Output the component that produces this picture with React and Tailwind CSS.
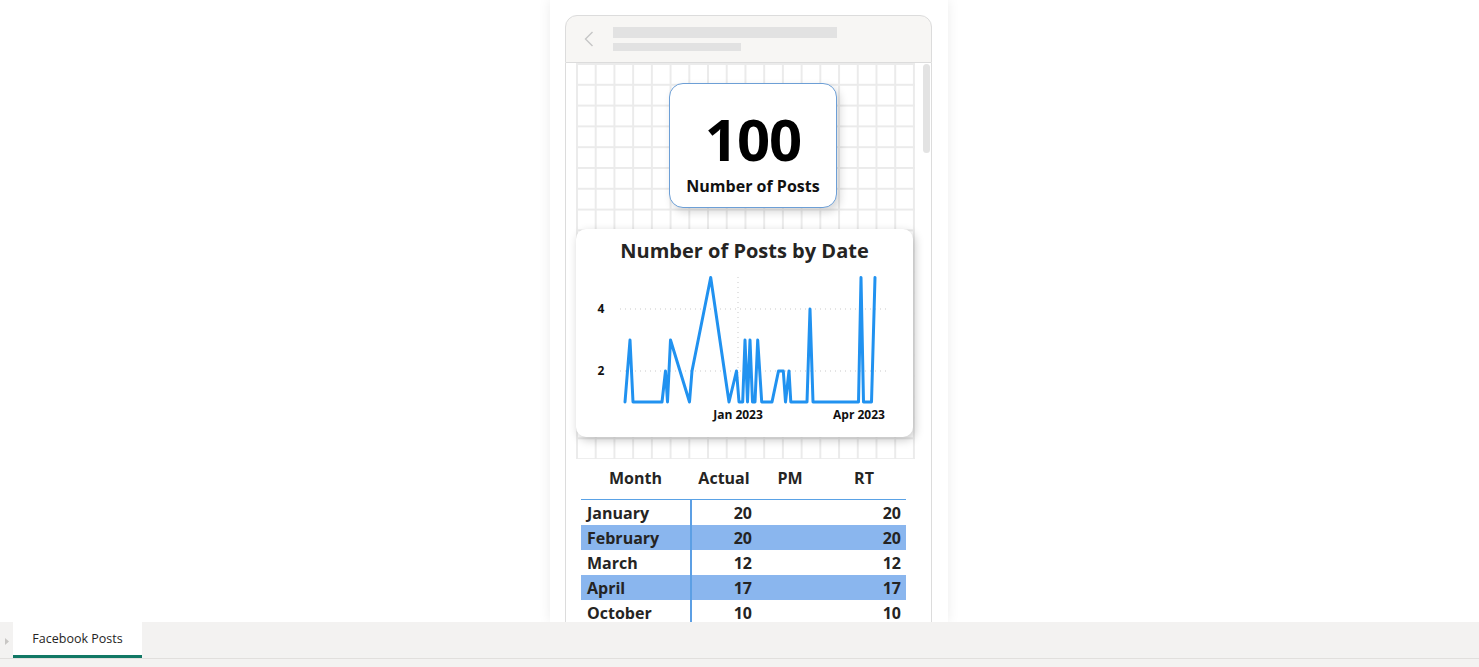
const PTS =
  "49,137 54,75 57,137 86,137 89.5,106 91.5,137 94.5,75 113.5,137 116,106 134.7,12.5 153,137 160.5,106 163,137 166.7,137 169,75 171.5,137 174,75 176.5,137 179,137 181.7,75 185.7,137 196,137 202.5,106 207.3,106 209.5,137 213,106 214.8,137 231,137 234,44 237,137 282.5,137 285,12.5 287.5,137 295.5,137 299,12.5";

const rows = [
  { m: "January", a: "20", r: "20", hl: false },
  { m: "February", a: "20", r: "20", hl: true },
  { m: "March", a: "12", r: "12", hl: false },
  { m: "April", a: "17", r: "17", hl: true },
  { m: "October", a: "10", r: "10", hl: false },
];

function Chart() {
  return (
    <svg width="337" height="172" viewBox="0 0 337 172" className="block">
      <g stroke="#c9c9c9" strokeWidth="1" strokeDasharray="1 4">
        <line x1="44" y1="44" x2="310" y2="44" />
        <line x1="44" y1="106" x2="310" y2="106" />
        <line x1="162" y1="12" x2="162" y2="137" />
      </g>
      <g fontFamily="'Open Sans', sans-serif" fontWeight="700" fontSize="12" fill="#111">
        <text x="25" y="48" textAnchor="middle">4</text>
        <text x="25" y="110" textAnchor="middle">2</text>
        <text x="162" y="154" textAnchor="middle">Jan 2023</text>
        <text x="283" y="154" textAnchor="middle">Apr 2023</text>
      </g>
      <polyline
        points={PTS}
        fill="none"
        stroke="#2192f0"
        strokeWidth="3"
        strokeLinejoin="round"
        strokeLinecap="round"
      />
    </svg>
  );
}

export default function App() {
  return (
    <div className="w-[1479px] h-[667px] bg-white flex flex-col overflow-hidden font-['Open_Sans',sans-serif] text-[#252423]">
      <div className="flex-1 min-h-0 flex">
        <div className="ml-[550px] w-[398px] h-full bg-white shadow-[0_0_12px_rgba(0,0,0,0.08)] pt-[15px] pl-[15px] flex flex-col">
          <div className="w-[367px] flex-1 min-h-0 flex flex-col">
            {/* phone header */}
            <div className="h-[48px] shrink-0 rounded-t-[12px] border border-[#dcdcdc] bg-[#f7f6f4] flex items-start">
              <svg width="10" height="16" viewBox="0 0 10 16" className="mt-[15px] ml-[18px]">
                <path d="M8.5 1 L1.5 8 L8.5 15" fill="none" stroke="#c6c6c6" strokeWidth="1.4" />
              </svg>
              <div className="ml-[19px] mt-[11px] flex flex-col">
                <div className="w-[224px] h-[11px] bg-[#e2e2e2]" />
                <div className="w-[128px] h-[8px] mt-[5px] bg-[#e2e2e2]" />
              </div>
            </div>
            {/* phone content */}
            <div className="flex-1 min-h-0 border-x border-[#dcdcdc] bg-white flex overflow-hidden pl-[10px]">
              <div className="w-[339px] shrink-0 flex flex-col">
                <div className="h-[396px] shrink-0 pt-[20px] bg-[linear-gradient(90deg,#ebebeb_2px,transparent_2px),linear-gradient(180deg,#ebebeb_2px,transparent_2px)] bg-size-[18.72px_20.8px]">
                  <div className="ml-[93px] w-[168px] h-[125px] rounded-[14px] border border-[#6d9fd6] bg-white shadow-[3px_4px_9px_rgba(0,0,0,0.16)] flex flex-col items-center pt-[26px]">
                    <div className="text-[58px] leading-[58px] font-bold text-black tracking-[-1px]">100</div>
                    <div className="mt-[7px] text-[16px] leading-[22px] font-bold text-[#111]">Number of Posts</div>
                  </div>
                  <div className="mt-[21px] w-[337px] h-[208px] rounded-[10px] bg-white shadow-[2px_3px_10px_rgba(0,0,0,0.22)] flex flex-col">
                    <div className="pt-[8px] h-[36px] text-center text-[20px] leading-[28px] font-bold text-[#252423]">
                      Number of Posts by Date
                    </div>
                    <Chart />
                  </div>
                </div>
                {/* table */}
                <div className="ml-[5px] w-[325px] flex flex-col">
                  <div className="h-[41px] pb-[2px] flex items-center text-[16px] font-bold text-[#252423] border-b border-[#5aa2e6]">
                    <div className="w-[109px] text-center">Month</div>
                    <div className="w-[68px] text-center">Actual</div>
                    <div className="w-[64px] text-center">PM</div>
                    <div className="w-[84px] text-center">RT</div>
                  </div>
                  {rows.map((r) => (
                    <div
                      key={r.m}
                      className={
                        "h-[25px] flex items-stretch text-[16px] leading-[23px] font-bold text-[#252423] " +
                        (r.hl ? "bg-[#8ab6ee]" : "bg-white")
                      }
                    >
                      <div className="w-[109px] pl-[6px] pt-[2px]">{r.m}</div>
                      <div className="w-[68px] border-l-2 border-[#5c9fe4] text-right pr-[6px] pt-[2px]">{r.a}</div>
                      <div className="w-[64px]" />
                      <div className="w-[84px] text-right pr-[5px] pt-[2px]">{r.r}</div>
                    </div>
                  ))}
                </div>
              </div>
              <div className="ml-[8px] mt-[1px] w-[7px] h-[89px] rounded-full bg-[#e3e3e3] shrink-0" />
            </div>
          </div>
        </div>
      </div>
      {/* bottom tabs bar */}
      <div className="h-[45px] shrink-0 bg-[#f3f2f1] flex flex-col">
        <div className="h-[37px] flex items-stretch border-b border-[#e1dfdd]">
          <div className="w-[13px] flex items-center justify-center">
            <svg width="4" height="7" viewBox="0 0 4 7" className="mt-[2px]">
              <path d="M0 0 L4 3.5 L0 7 Z" fill="#c8c6c4" />
            </svg>
          </div>
          <div className="w-[129px] bg-white border-b-[3px] border-[#117865] flex items-center justify-center text-[12.5px] text-[#252423] pt-[1px]">
            Facebook Posts
          </div>
        </div>
      </div>
    </div>
  );
}
